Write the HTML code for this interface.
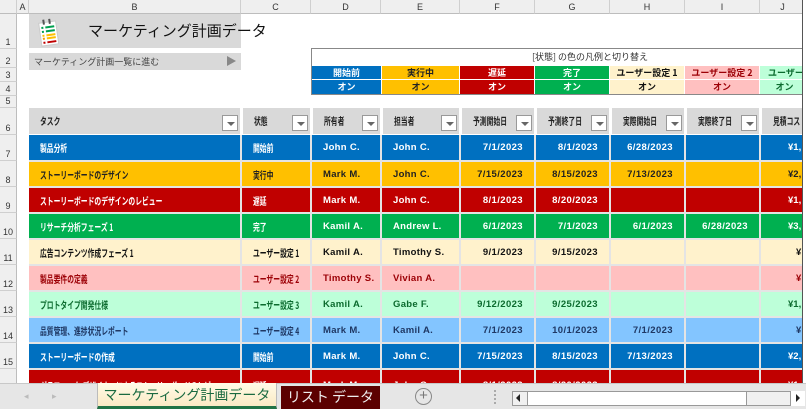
<!DOCTYPE html>
<html><head><meta charset="utf-8">
<style>
*{box-sizing:border-box;margin:0;padding:0}
body{width:806px;height:409px;overflow:hidden;background:#fff;position:relative;font-family:"Liberation Sans","Noto Sans CJK JP",sans-serif;}
.a{position:absolute}
.ch{position:absolute;top:0;height:14px;background:#efefef;border-right:1px solid #cfcfcf;border-bottom:1px solid #bdbdbd;font-size:9px;color:#333;text-align:center;line-height:14px}
.rh{position:absolute;left:0;width:17px;background:#efefef;border-right:1px solid #bdbdbd;border-bottom:1px solid #cfcfcf;font-size:9px;color:#333;text-align:center;display:flex;align-items:flex-end;justify-content:center;padding-bottom:1px}
table{border-collapse:collapse;table-layout:fixed;position:absolute}
td{border-right:2px solid #e4e4e4;border-bottom:2px solid #e4e4e4;height:26px;font-size:10px;font-weight:bold;white-space:nowrap;overflow:hidden;padding:0 0 0 11px;font-family:"Noto Sans CJK JP",sans-serif}
td.d{text-align:right;padding:0 11px 0 0;font-family:"Liberation Sans",sans-serif;font-size:9.5px;letter-spacing:0.4px}
td.n{font-family:"Liberation Sans",sans-serif;font-size:9.5px;letter-spacing:0.3px}
td.y{font-family:"Liberation Sans",sans-serif;font-size:9.5px;padding-left:27px}
td.y1{font-family:"Liberation Sans",sans-serif;font-size:9.5px;padding-left:35px}
.s{display:inline-block;transform:scaleX(.68);transform-origin:0 50%}
.bl{background:#0070c0;color:#fff}.ye{background:#ffc000;color:#222}.re{background:#c00000;color:#fff}.gr{background:#00b050;color:#fff}
.cr{background:#fff2cc;color:#111}.pk{background:#ffc0c0;color:#9c0006}.mi{background:#bdffd9;color:#0b6b2e}.lb{background:#83c5ff;color:#1f3864}
.hc{position:absolute;top:108px;height:26px;background:#d9d9d9;font-size:10px;font-weight:bold;color:#222;line-height:26px;padding-left:11px;font-family:"Noto Sans CJK JP",sans-serif;white-space:nowrap;overflow:hidden}
.dd{position:absolute;right:2px;top:7px;width:16px;height:16px;border:1px solid #999;background:#fff}
.dd:after{content:"";position:absolute;left:4px;top:6px;border-left:4px solid transparent;border-right:4px solid transparent;border-top:4px solid #666}
.lg{position:absolute;height:14px;font-size:9px;font-weight:bold;text-align:center;line-height:14px;border-right:1px solid #fff;font-family:"Noto Sans CJK JP",sans-serif;white-space:nowrap;overflow:hidden}
</style></head><body>
<div class="ch" style="left:0;width:17px"></div>
<div class="ch" style="left:17px;width:12px">A</div>
<div class="ch" style="left:29px;width:212px">B</div>
<div class="ch" style="left:241px;width:70px">C</div>
<div class="ch" style="left:311px;width:70px">D</div>
<div class="ch" style="left:381px;width:79px">E</div>
<div class="ch" style="left:460px;width:75px">F</div>
<div class="ch" style="left:535px;width:75px">G</div>
<div class="ch" style="left:610px;width:75px">H</div>
<div class="ch" style="left:685px;width:75px">I</div>
<div class="ch" style="left:760px;width:46px">J</div>
<div class="rh" style="top:14px;height:35px">1</div>
<div class="rh" style="top:49px;height:19px">2</div>
<div class="rh" style="top:68px;height:14px">3</div>
<div class="rh" style="top:82px;height:14px">4</div>
<div class="rh" style="top:96px;height:12px">5</div>
<div class="rh" style="top:108px;height:27px">6</div>
<div class="rh" style="top:135px;height:26px">7</div>
<div class="rh" style="top:161px;height:26px">8</div>
<div class="rh" style="top:187px;height:26px">9</div>
<div class="rh" style="top:213px;height:26px">10</div>
<div class="rh" style="top:239px;height:26px">11</div>
<div class="rh" style="top:265px;height:26px">12</div>
<div class="rh" style="top:291px;height:26px">13</div>
<div class="rh" style="top:317px;height:26px">14</div>
<div class="rh" style="top:343px;height:26px">15</div>
<div class="rh" style="top:369px;height:20px"></div>

<div class="a" style="left:29px;top:14px;width:212px;height:34px;background:#d9d9d9"></div>
<svg class="a" style="left:36px;top:17px" width="26" height="30" viewBox="0 0 26 30">
<g transform="rotate(-8 13 15)"><rect x="4" y="5" width="17" height="23" fill="#fff" stroke="#ccc"/>
<rect x="8" y="2" width="2" height="5" fill="#555"/><rect x="14" y="2" width="2" height="5" fill="#555"/>
<rect x="6" y="9" width="2" height="2" fill="#00a050"/><rect x="10" y="9" width="9" height="2" fill="#00a050"/>
<rect x="6" y="13" width="2" height="2" fill="#00a050"/><rect x="10" y="13" width="9" height="2" fill="#00a050"/>
<rect x="6" y="17" width="2" height="2" fill="#ffc000"/><rect x="10" y="17" width="9" height="2" fill="#ffc000"/>
<rect x="6" y="20" width="2" height="2" fill="#f0a000"/><rect x="10" y="20" width="9" height="2" fill="#ffc000"/>
<rect x="6" y="24" width="2" height="2" fill="#c00000"/><rect x="10" y="24" width="9" height="2" fill="#c00000"/></g></svg>
<div class="a" style="left:88px;top:20px;font-size:15px;color:#111;font-family:'Noto Sans CJK JP',sans-serif">マーケティング計画データ</div>
<div class="a" style="left:29px;top:53px;width:212px;height:17px;background:#d9d9d9;font-size:9px;color:#444;line-height:17px;padding-left:5px;font-family:'Noto Sans CJK JP',sans-serif">マーケティング計画一覧に進む</div>
<div class="a" style="left:227px;top:56px;border-top:5px solid transparent;border-bottom:5px solid transparent;border-left:9px solid #888"></div>

<div class="a" style="left:311px;top:48px;width:500px;height:47px;border:1px solid #888;border-right:none"></div>
<div class="a" style="left:470px;top:50px;width:240px;text-align:center;font-size:9px;color:#333;font-family:'Noto Sans CJK JP',sans-serif">[状態] の色の凡例と切り替え</div>
<div class="lg bl" style="left:312px;top:66px;width:70px;border-bottom:1px solid #fff">開始前</div>
<div class="lg ye" style="left:382px;top:66px;width:78px;border-bottom:1px solid #fff">実行中</div>
<div class="lg re" style="left:460px;top:66px;width:75px;border-bottom:1px solid #fff">遅延</div>
<div class="lg gr" style="left:535px;top:66px;width:75px;border-bottom:1px solid #fff">完了</div>
<div class="lg cr" style="left:610px;top:66px;width:75px;border-bottom:1px solid #fff">ユーザー設定 1</div>
<div class="lg pk" style="left:685px;top:66px;width:75px;border-bottom:1px solid #fff">ユーザー設定 2</div>
<div class="lg mi" style="left:760px;top:66px;width:60px;border-bottom:1px solid #fff;text-align:left;padding-left:8px">ユーザー設定 3</div>
<div class="lg bl" style="left:312px;top:80px;width:70px">オン</div>
<div class="lg ye" style="left:382px;top:80px;width:78px">オン</div>
<div class="lg re" style="left:460px;top:80px;width:75px">オン</div>
<div class="lg gr" style="left:535px;top:80px;width:75px">オン</div>
<div class="lg cr" style="left:610px;top:80px;width:75px">オン</div>
<div class="lg pk" style="left:685px;top:80px;width:75px">オン</div>
<div class="lg mi" style="left:760px;top:80px;width:50px">オン</div>

<div class="hc" style="left:29px;width:211px"><span class="s">タスク</span><span class="dd"></span></div>
<div class="hc" style="left:243px;width:67px"><span class="s">状態</span><span class="dd"></span></div>
<div class="hc" style="left:313px;width:67px"><span class="s">所有者</span><span class="dd"></span></div>
<div class="hc" style="left:383px;width:76px"><span class="s">担当者</span><span class="dd"></span></div>
<div class="hc" style="left:462px;width:72px"><span class="s">予測開始日</span><span class="dd"></span></div>
<div class="hc" style="left:537px;width:72px"><span class="s">予測終了日</span><span class="dd"></span></div>
<div class="hc" style="left:612px;width:72px"><span class="s">実際開始日</span><span class="dd"></span></div>
<div class="hc" style="left:687px;width:72px"><span class="s">実際終了日</span><span class="dd"></span></div>
<div class="hc" style="left:762px;width:50px"><span class="s">見積コスト</span></div>

<table style="left:29px;top:135px;width:783px">
<colgroup><col style="width:212px"><col style="width:70px"><col style="width:70px"><col style="width:79px"><col style="width:75px"><col style="width:75px"><col style="width:75px"><col style="width:75px"><col style="width:52px"></colgroup>
<tr class="bl"><td><span class="s">製品分析</span></td><td><span class="s">開始前</span></td><td class="n">John C.</td><td class="n">John C.</td><td class="d">7/1/2023</td><td class="d">8/1/2023</td><td class="d">6/28/2023</td><td></td><td class="y">¥1,</td></tr>
<tr class="ye"><td><span class="s">ストーリーボードのデザイン</span></td><td><span class="s">実行中</span></td><td class="n">Mark M.</td><td class="n">John C.</td><td class="d">7/15/2023</td><td class="d">8/15/2023</td><td class="d">7/13/2023</td><td></td><td class="y">¥2,</td></tr>
<tr class="re"><td><span class="s">ストーリーボードのデザインのレビュー</span></td><td><span class="s">遅延</span></td><td class="n">Mark M.</td><td class="n">John C.</td><td class="d">8/1/2023</td><td class="d">8/20/2023</td><td></td><td></td><td class="y">¥1,</td></tr>
<tr class="gr"><td><span class="s">リサーチ分析フェーズ 1</span></td><td><span class="s">完了</span></td><td class="n">Kamil A.</td><td class="n">Andrew L.</td><td class="d">6/1/2023</td><td class="d">7/1/2023</td><td class="d">6/1/2023</td><td class="d">6/28/2023</td><td class="y">¥3,</td></tr>
<tr class="cr"><td><span class="s">広告コンテンツ作成フェーズ 1</span></td><td><span class="s">ユーザー設定 1</span></td><td class="n">Kamil A.</td><td class="n">Timothy S.</td><td class="d">9/1/2023</td><td class="d">9/15/2023</td><td></td><td></td><td class="y1">¥</td></tr>
<tr class="pk"><td><span class="s">製品要件の定義</span></td><td><span class="s">ユーザー設定 2</span></td><td class="n">Timothy S.</td><td class="n">Vivian A.</td><td></td><td></td><td></td><td></td><td class="y1">¥</td></tr>
<tr class="mi"><td><span class="s">プロトタイプ開発仕様</span></td><td><span class="s">ユーザー設定 3</span></td><td class="n">Kamil A.</td><td class="n">Gabe F.</td><td class="d">9/12/2023</td><td class="d">9/25/2023</td><td></td><td></td><td class="y">¥1,</td></tr>
<tr class="lb"><td><span class="s">品質管理、進捗状況レポート</span></td><td><span class="s">ユーザー設定 4</span></td><td class="n">Mark M.</td><td class="n">Kamil A.</td><td class="d">7/1/2023</td><td class="d">10/1/2023</td><td class="d">7/1/2023</td><td></td><td class="y1">¥</td></tr>
<tr class="bl"><td><span class="s">ストーリーボードの作成</span></td><td><span class="s">開始前</span></td><td class="n">Mark M.</td><td class="n">John C.</td><td class="d">7/15/2023</td><td class="d">8/15/2023</td><td class="d">7/13/2023</td><td></td><td class="y">¥2,</td></tr>
<tr class="re"><td style="padding-top:6px"><span class="s">グラフィック デザイナーによるストーリーボードのレビュー</span></td><td style="padding-top:6px"><span class="s">遅延</span></td><td class="n" style="padding-top:6px">Mark M.</td><td class="n" style="padding-top:6px">John C.</td><td class="d" style="padding-top:6px">8/1/2023</td><td class="d" style="padding-top:6px">8/20/2023</td><td></td><td></td><td class="y" style="padding-top:6px">¥1,</td></tr>
</table>
<div class="a" style="left:802px;top:0;width:4px;height:384px;background:#fff;border-left:1px solid #555"></div>

<div class="a" style="left:0;top:383px;width:806px;height:26px;background:#e6e6e6;border-top:1px solid #c8c8c8"></div>
<div class="a" style="left:24px;top:391px;font-size:9px;color:#bbb">◂</div>
<div class="a" style="left:52px;top:391px;font-size:9px;color:#bbb">▸</div>
<div class="a" style="left:97px;top:383px;width:180px;height:26px;background:linear-gradient(#fffbe8,#fbeac4);border-left:1px solid #bbb;border-right:1px solid #bbb;border-bottom:3px solid #217346;text-align:center;font-size:14px;line-height:24px;color:#1a6a40;font-family:'Noto Sans CJK JP',sans-serif">マーケティング計画データ</div>
<div class="a" style="left:281px;top:386px;width:99px;height:23px;background:#5c0000;text-align:center;font-size:14px;line-height:22px;color:#eee;font-family:'Noto Sans CJK JP',sans-serif">リスト データ</div>
<div class="a" style="left:415px;top:388px;width:17px;height:17px;border:1.5px solid #888;border-radius:50%;text-align:center;line-height:14px;font-size:15px;color:#777">+</div>
<div class="a" style="left:494px;top:390px;width:2px;height:14px;border-left:2px dotted #aaa"></div>
<div class="a" style="left:512px;top:391px;width:293px;height:15px;border:1px solid #999;background:#f0f0f0"></div>
<div class="a" style="left:527px;top:392px;width:220px;height:13px;background:#fff;border-right:1px solid #999;border-left:1px solid #999"></div>
<div class="a" style="left:516px;top:394px;border-top:4px solid transparent;border-bottom:4px solid transparent;border-right:4px solid #222"></div>
<div class="a" style="left:790px;top:391px;width:15px;height:15px;border-left:1px solid #999;background:#fff"></div>
<div class="a" style="left:796px;top:394px;border-top:4px solid transparent;border-bottom:4px solid transparent;border-left:4px solid #222"></div>
</body></html>
